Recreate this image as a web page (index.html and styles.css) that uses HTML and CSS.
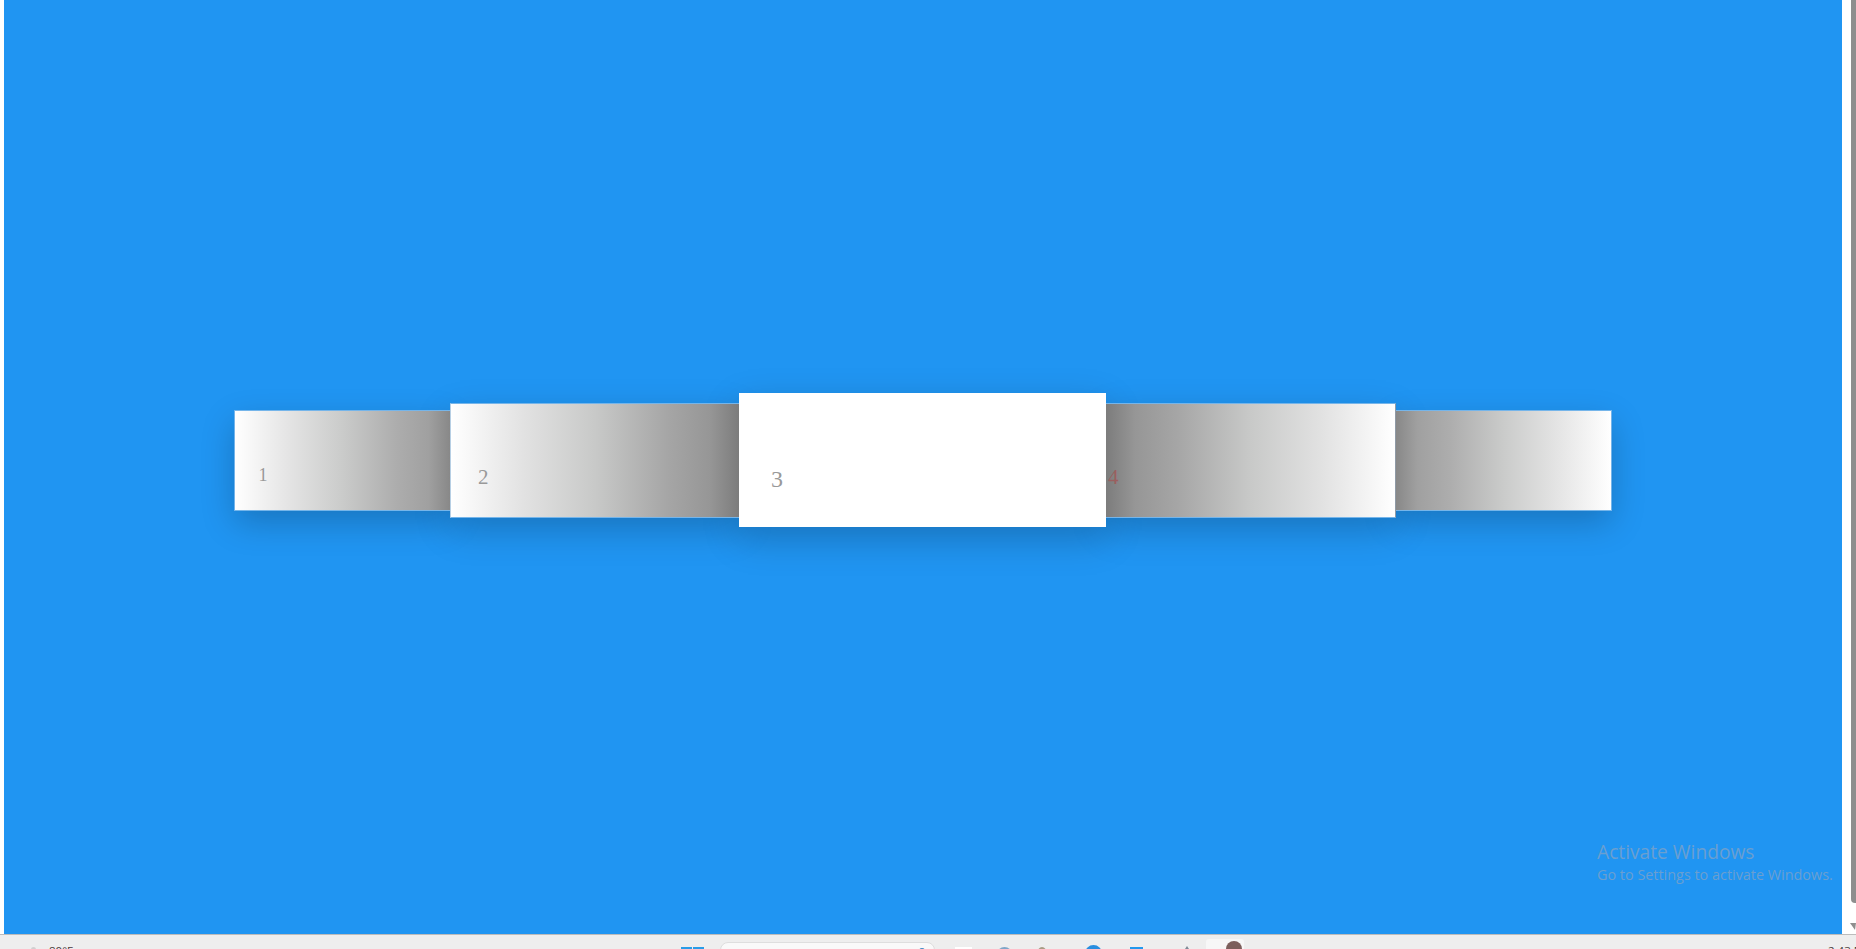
FILE: index.html
```html
<!DOCTYPE html>
<html lang="en">
<head>
<meta charset="utf-8">
<title>Carousel</title>
<link rel="stylesheet" href="styles.css">
</head>
<body>
<div class="window">
  <main class="stage">
    <div class="track">
      <div class="card card-far left-side"><span class="num num-1">1</span></div>
      <div class="card card-near left-side"><span class="num num-2">2</span></div>
      <div class="card card-center"><span class="num num-3">3</span></div>
      <div class="card card-near right-side"><span class="num num-4">4</span></div>
      <div class="card card-far right-side"></div>
    </div>
    <div class="watermark">
      <div class="wm-title">Activate Windows</div>
      <div class="wm-sub">Go to Settings to activate Windows.</div>
    </div>
  </main>
  <aside class="scrollbar">
    <div class="thumb"></div>
    <div class="arrow"></div>
  </aside>
</div>
<footer class="taskbar">
  <span class="tb-dot"></span>
  <span class="tb-temp">80°F</span>
  <span class="tb-win"><i></i><i></i></span>
  <span class="tb-search"><i></i></span>
  <span class="tb-page"></span>
  <span class="tb-round tb-steel"></span>
  <span class="tb-round tb-tan"></span>
  <span class="tb-round tb-edge"></span>
  <span class="tb-rect"></span>
  <span class="tb-tri"></span>
  <span class="tb-user"><i></i></span>
  <span class="tb-time">2:43 PM</span>
</footer>
</body>
</html>
```
FILE: styles.css
```css
* { box-sizing: border-box; }
html, body { margin: 0; height: 949px; overflow: hidden; background: #fff; }
body { display: flex; flex-direction: column; width: 1856px; }

.window { display: flex; height: 934px; padding-left: 4px; }
.stage {
  position: relative;
  width: 1838px;
  height: 934px;
  background: #2095f2;
  display: flex;
  align-items: center;
  justify-content: center;
  padding: 0 1px 14px 0;
}
.track { display: flex; align-items: center; isolation: isolate; }

.card {
  position: relative;
  flex: none;
  font-family: "Liberation Serif", "Times New Roman", serif;
  border-style: solid;
  border-width: 1px 0;
  border-color: #75b5ea;
}
.card::before {
  content: "";
  position: absolute;
  inset: 0;
  z-index: -1;
  box-shadow: 0 12px 34px rgba(0, 0, 0, 0.22);
}
.card-far { height: 101px; }
.card-near { height: 115px; }
.card-far.left-side { width: 216.5px; border-left: 1px solid #74b4ea; }
.card-far.right-side { width: 216px; border-right: 1px solid #74b4ea; }
.card-near.left-side { width: 289px; border-left: 1px solid #b7cfe4; }
.card-near.right-side { width: 289.5px; border-right: 1px solid #8f9aa6; }
.card-center {
  width: 367px;
  height: 134px;
  background: #fff;
  border: 0;
}
.card-near.left-side {
  background-image: linear-gradient(to right, #fff 0%, #e2e2e2 25%, #c8c9c8 50%, #a6a6a6 75%, #969696 90%, #7c7c7c 100%);
}
.card-near.right-side {
  background-image: linear-gradient(to left, #fff 0%, #e2e2e2 25%, #c8c9c8 50%, #a6a6a6 75%, #969696 90%, #7c7c7c 100%);
}
.card-far.left-side {
  background-image: linear-gradient(to right, #fff 0%, #e4e4e4 25%, #cacbca 50%, #adadad 75%, #a0a0a0 90%, #888 100%);
}
.card-far.right-side {
  background-image: linear-gradient(to left, #fff 0%, #e4e4e4 25%, #cacbca 50%, #adadad 75%, #a0a0a0 90%, #888 100%);
}

.num { display: block; color: #999; line-height: 1.15; }
.num-1 { font-size: 18px; padding: 54px 0 0 24px; }
.num-2 { font-size: 21px; padding: 61px 0 0 27px; }
.num-3 { font-size: 24px; padding: 73px 0 0 32px; }
.num-4 { font-size: 21px; padding: 61px 0 0 2px; color: #9a5f5f; }

.watermark {
  position: absolute;
  left: 1593px;
  top: 839px;
  font-family: "Open Sans", "Noto Sans", sans-serif;
  color: #6a9fd0;
  white-space: nowrap;
}
.wm-title { font-size: 19.2px; line-height: 25px; }
.wm-sub { font-size: 14.4px; line-height: 20px; margin-top: 1px; }

.scrollbar { position: relative; width: 14px; height: 934px; background: #fff; }
.thumb {
  position: absolute; right: 0; top: 0;
  width: 5px; height: 903px;
  background: #8e8e8e;
  border-bottom-left-radius: 4px;
}
.arrow {
  position: absolute; right: 0; top: 923px;
  width: 0; height: 0;
  border-left: 5px solid transparent;
  border-right: 1px solid transparent;
  border-top: 7px solid #8e8e8e;
}

.taskbar {
  display: flex;
  align-items: flex-start;
  width: 1856px;
  height: 15px;
  background: #eeeeee;
  border-top: 1px solid #bcbcbc;
  overflow: hidden;
  font-family: "Open Sans", "Noto Sans", sans-serif;
  font-size: 11.5px;
  color: #4a3a3a;
}
.taskbar > * { flex: none; }
.tb-dot { width: 5px; height: 5px; margin: 12px 0 0 31px; border-radius: 50%; background: #d0d0d0; }
.tb-temp { margin: 8px 0 0 13px; line-height: 16px; width: 23px; }
.tb-win { display: flex; gap: 1px; margin: 12px 0 0 609px; }
.tb-win i { display: block; width: 11px; height: 10px; background: #2a9de8; }
.tb-search {
  display: block; position: relative;
  width: 215px; height: 20px;
  margin: 7px 0 0 16px;
  background: #f9f9f9;
  border: 1px solid #dedede;
  border-radius: 8px;
}
.tb-search i {
  position: absolute; left: 198px; top: 5px;
  width: 6px; height: 6px; border-radius: 50%; background: #3f88c5;
}
.tb-page { width: 17px; height: 10px; margin: 12px 0 0 20px; background: #fff; }
.tb-round { border-radius: 50%; height: 14px; }
.tb-steel { width: 15px; margin: 12px 0 0 25px; background: #7fa6c8; }
.tb-tan { width: 10px; margin: 12px 0 0 25px; background: #a89c85; }
.tb-edge { width: 17px; height: 17px; margin: 10px 0 0 38px; background: #2a8fe0; }
.tb-rect { width: 13px; height: 10px; margin: 12px 0 0 28px; background: #2399ee; }
.tb-tri {
  width: 0; height: 0;
  margin: 11px 0 0 40px;
  border-left: 4px solid transparent;
  border-right: 4px solid transparent;
  border-bottom: 6px solid #7f8a96;
}
.tb-user {
  display: block;
  width: 38px; height: 12px;
  margin: 4px 0 0 15px;
  padding: 2px 0 0 20px;
  background: #f7f7f7;
  border-radius: 3px 3px 0 0;
}
.tb-user i { display: block; width: 16px; height: 16px; border-radius: 50%; background: #7c5f5c; }
.tb-time { margin: 8px 0 0 584px; line-height: 16px; white-space: nowrap; }
```
